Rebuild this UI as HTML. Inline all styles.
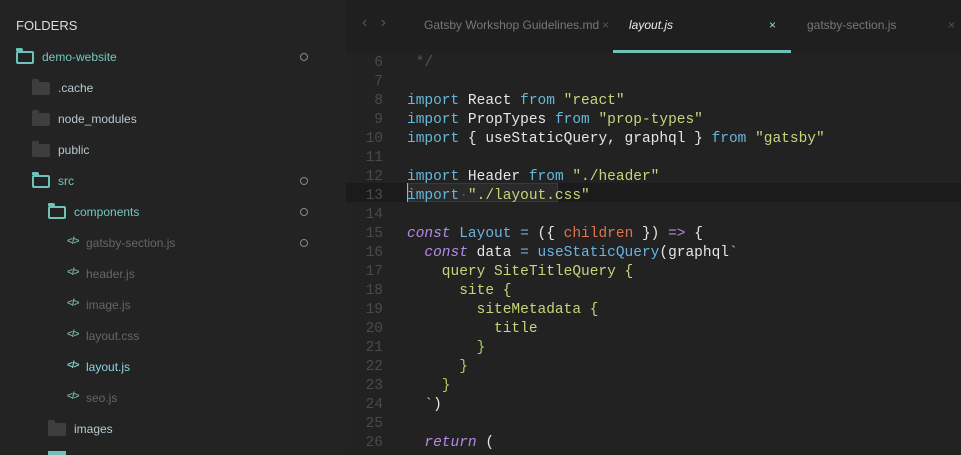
<!DOCTYPE html>
<html><head><style>
body{margin:0;width:961px;height:454px;overflow:hidden;background:#222;font-family:"Liberation Sans",sans-serif;position:relative}
#side{position:absolute;left:0;top:0;width:346px;height:454px;background:#232323}
.h{position:absolute;left:16px;top:18px;color:#ddd;font-size:13px}
.r{position:absolute;font-size:12px;height:16px;line-height:16px}
.fo{position:absolute;width:17px;height:11px;border:2px solid #6fc2b8;border-radius:2px;box-sizing:border-box;width:18px;height:13px}
.fo:before{content:"";position:absolute;left:-2px;top:-5px;width:7px;height:3px;background:#6fc2b8;border-radius:1px 2px 0 0}
.fc{position:absolute;width:18px;height:13px;background:#3e3e3e;border-radius:2px}
.fc:before{content:"";position:absolute;left:0;top:-3px;width:7px;height:4px;background:#3e3e3e;border-radius:2px 2px 0 0}
.ci{position:absolute;left:300px;width:6px;height:6px;border:1.3px solid #888;border-radius:50%}
.ic{position:absolute;font-size:10px;color:#6fa7a0;font-weight:bold;letter-spacing:-1px}
#tabs{position:absolute;left:346px;top:0;width:615px;height:53px;background:#1f1f1f}
.t{position:absolute;top:18px;font-size:12px;color:#777;white-space:nowrap}
#code{position:absolute;left:346px;top:53px;width:615px;height:401px;font-family:"Liberation Mono",monospace;font-size:14.5px}
.l{position:absolute;left:0;height:19px;line-height:19px;white-space:pre;width:615px}
.n{position:absolute;right:578px;color:#4a4a4a;text-align:right}
.c{position:absolute;left:61px;color:#e6e6e6}
.k{color:#66b8d8}.s{color:#c5d67a}.p{color:#b48ae6;font-style:italic}.o{color:#e0734e}.b{color:#6cb3e0}.g{color:#a7cf62}
</style></head><body>
<div id="side">
<div class="h">FOLDERS</div>
<div class="fo" style="left:16px;top:51px"></div><div class="r" style="left:42px;top:49px;color:#73c8bd">demo-website</div><div class="ci" style="top:53px"></div>
<div class="fc" style="left:32px;top:82px"></div><div class="r" style="left:58px;top:80px;color:#b8c8d0">.cache</div>
<div class="fc" style="left:32px;top:113px"></div><div class="r" style="left:58px;top:111px;color:#b8c8d0">node_modules</div>
<div class="fc" style="left:32px;top:144px"></div><div class="r" style="left:58px;top:142px;color:#b8c8d0">public</div>
<div class="fo" style="left:32px;top:175px"></div><div class="r" style="left:58px;top:173px;color:#73c8bd">src</div><div class="ci" style="top:177px"></div>
<div class="fo" style="left:48px;top:206px"></div><div class="r" style="left:74px;top:204px;color:#73c8bd">components</div><div class="ci" style="top:208px"></div>
<div class="ic" style="left:67px;top:236px">&lt;/&gt;</div><div class="r" style="left:86px;top:235px;color:#666">gatsby-section.js</div><div class="ci" style="top:239px"></div>
<div class="ic" style="left:67px;top:267px">&lt;/&gt;</div><div class="r" style="left:86px;top:266px;color:#666">header.js</div>
<div class="ic" style="left:67px;top:298px">&lt;/&gt;</div><div class="r" style="left:86px;top:297px;color:#666">image.js</div>
<div class="ic" style="left:67px;top:329px">&lt;/&gt;</div><div class="r" style="left:86px;top:328px;color:#666">layout.css</div>
<div class="ic" style="left:67px;top:360px;color:#7fd0c5">&lt;/&gt;</div><div class="r" style="left:86px;top:359px;color:#8ad4e0">layout.js</div>
<div class="ic" style="left:67px;top:391px">&lt;/&gt;</div><div class="r" style="left:86px;top:390px;color:#666">seo.js</div>
<div class="fc" style="left:48px;top:423px"></div><div class="r" style="left:74px;top:421px;color:#b8c8d0">images</div>
<div style="position:absolute;left:48px;top:451px;width:18px;height:4px;background:#6fc2b8"></div>
</div>
<div id="tabs">
<div class="t" style="left:16px;font-size:16px;top:14px;color:#555">&#8249;&nbsp;&nbsp;&nbsp;&#8250;</div>
<div class="t" style="left:78px">Gatsby Workshop Guidelines.md</div><div class="t" style="left:256px;color:#555">×</div>
<div class="t" style="left:283px;color:#eee;font-style:italic">layout.js</div><div class="t" style="left:423px;color:#8dd">×</div>
<div class="t" style="left:461px">gatsby-section.js</div><div class="t" style="left:602px;color:#555">×</div>
<div style="position:absolute;left:267px;top:50px;width:178px;height:3px;background:#6fc2b8"></div>
</div>
<div id="code">
<div style="position:absolute;left:0;top:130px;width:615px;height:19px;background:#1b1b1b"></div>
<div style="position:absolute;left:61px;top:130px;width:2px;height:19px;background:#e0b020"></div>
<div style="position:absolute;left:62px;top:130px;width:150px;height:19px;border:1px solid #3a3a3a;box-sizing:border-box;background:#2a2a2a"></div>
<div class="l" style="top:1px"><span class="n">6</span><span class="c" style="color:#555"> */</span></div>
<div class="l" style="top:20px"><span class="n">7</span></div>
<div class="l" style="top:39px"><span class="n">8</span><span class="c"><span class="k">import</span> React <span class="k">from</span> <span class="s">"react"</span></span></div>
<div class="l" style="top:58px"><span class="n">9</span><span class="c"><span class="k">import</span> PropTypes <span class="k">from</span> <span class="s">"prop-types"</span></span></div>
<div class="l" style="top:77px"><span class="n">10</span><span class="c"><span class="k">import</span> { useStaticQuery, graphql } <span class="k">from</span> <span class="s">"gatsby"</span></span></div>
<div class="l" style="top:96px"><span class="n">11</span></div>
<div class="l" style="top:115px"><span class="n">12</span><span class="c"><span class="k">import</span> Header <span class="k">from</span> <span class="s">"./header"</span></span></div>
<div class="l" style="top:134px"><span class="n">13</span><span class="c"><span class="k">import</span><span style="color:#555">·</span><span class="s">"./layout.css"</span></span></div>
<div class="l" style="top:153px"><span class="n">14</span></div>
<div class="l" style="top:172px"><span class="n">15</span><span class="c"><span class="p">const</span> <span class="b">Layout</span> <span class="b">=</span> ({ <span class="o">children</span> }) <span class="p" style="font-style:normal">=&gt;</span> {</span></div>
<div class="l" style="top:191px"><span class="n">16</span><span class="c">  <span class="p">const</span> data <span class="b">=</span> <span class="b">useStaticQuery</span>(graphql<span class="s">`</span></span></div>
<div class="l" style="top:210px"><span class="n">17</span><span class="c s">    query SiteTitleQuery {</span></div>
<div class="l" style="top:229px"><span class="n">18</span><span class="c s">      site {</span></div>
<div class="l" style="top:248px"><span class="n">19</span><span class="c s">        siteMetadata {</span></div>
<div class="l" style="top:267px"><span class="n">20</span><span class="c s">          title</span></div>
<div class="l" style="top:286px"><span class="n">21</span><span class="c g">        }</span></div>
<div class="l" style="top:305px"><span class="n">22</span><span class="c g">      }</span></div>
<div class="l" style="top:324px"><span class="n">23</span><span class="c g">    }</span></div>
<div class="l" style="top:343px"><span class="n">24</span><span class="c">  <span class="s">`</span>)</span></div>
<div class="l" style="top:362px"><span class="n">25</span></div>
<div class="l" style="top:381px"><span class="n">26</span><span class="c">  <span class="p">return</span> (</span></div>
</div>
</body></html>
